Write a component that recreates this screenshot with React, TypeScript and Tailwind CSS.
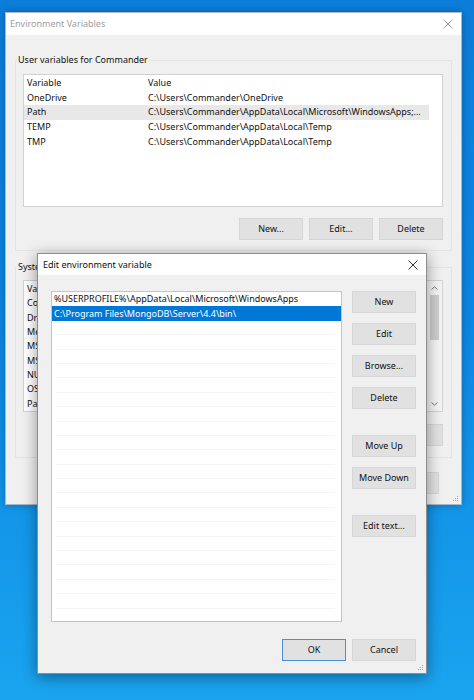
import React from "react";

function CloseX({ color }: { color: string }) {
  return (
    <svg width="10" height="10" viewBox="0 0 10 10" className="shrink-0">
      <path d="M0.5 0.5L9.5 9.5M9.5 0.5L0.5 9.5" stroke={color} strokeWidth="1" fill="none" />
    </svg>
  );
}

function Btn({ children, focused = false }: { children: React.ReactNode; focused?: boolean }) {
  return (
    <div
      className={
        focused
          ? "flex h-[22px] w-[64px] shrink-0 items-center justify-center border border-[#4a90d4] bg-[#e1e1e1] text-[#111]"
          : "flex h-[22px] w-[64px] shrink-0 items-center justify-center border border-[#d6d6d6] bg-[#e1e1e1] text-[#111]"
      }
    >
      {children}
    </div>
  );
}

function Grip() {
  return (
    <svg width="7" height="7" viewBox="0 0 7 7" fill="#a6a6a6">
      <rect x="5" y="1" width="1" height="1" />
      <rect x="5" y="3" width="1" height="1" />
      <rect x="3" y="3" width="1" height="1" />
      <rect x="5" y="5" width="1" height="1" />
      <rect x="3" y="5" width="1" height="1" />
      <rect x="1" y="5" width="1" height="1" />
    </svg>
  );
}

function Chevron({ up }: { up: boolean }) {
  return (
    <svg width="7" height="4" viewBox="0 0 7 4">
      <path d={up ? "M0.5 3.5L3.5 0.8L6.5 3.5" : "M0.5 0.5L3.5 3.2L6.5 0.5"} stroke="#7a7a7a" strokeWidth="1" fill="none" />
    </svg>
  );
}

const userRows: [string, string][] = [
  ["OneDrive", "C:\\Users\\Commander\\OneDrive"],
  ["Path", "C:\\Users\\Commander\\AppData\\Local\\Microsoft\\WindowsApps;..."],
  ["TEMP", "C:\\Users\\Commander\\AppData\\Local\\Temp"],
  ["TMP", "C:\\Users\\Commander\\AppData\\Local\\Temp"],
];

const sysRows = ["ComSpec", "DriverData", "MemoryPath", "MSMPI_BIN", "MSMPI_INC", "NUMBER_OF_PROCESSORS", "OS", "Path"];

export default function App() {
  const emptyRows = Array.from({ length: 21 }, (_, i) => i);
  return (
    <div className="relative h-[700px] w-[474px] overflow-hidden bg-[linear-gradient(180deg,#0c7dd8_0%,#0b86e2_45%,#1aa4ef_100%)] font-['Noto_Sans','Open_Sans',sans-serif] text-[9px] leading-[12px] text-[#111]">
      {/* Outer window: Environment Variables */}
      <div className="absolute left-[5px] top-[12px] flex h-[493px] w-[457px] flex-col border border-[#a9b7c6] bg-[#f0f0f0] shadow-[0_0_8px_rgba(0,0,0,0.25)]">
        <div className="flex h-[22px] shrink-0 items-center justify-between bg-white pl-[4px] pr-[8px] text-[#9d9d9d]">
          <span>Environment Variables</span>
          <CloseX color="#a0a0a0" />
        </div>
        <div className="flex flex-col px-[9px]">
          {/* user group */}
          <div className="mt-[25px] flex flex-col border border-[#e4e4e4] pb-[10px] pl-[7px] pr-[8px]">
            <div className="-ml-[6px] -mt-[7px] h-[12px] w-fit bg-[#f0f0f0] px-[1px]">User variables for Commander</div>
            <div className="mt-[8px] flex h-[133px] flex-col border border-[#d2d2d2] bg-white pt-[1px]">
              <div className="flex h-[14.6px] w-[405px] items-center">
                <span className="w-[124px] pl-[3px]">Variable</span>
                <span>Value</span>
              </div>
              {userRows.map(([k, v]) => (
                <div
                  key={k}
                  className={
                    k === "Path"
                      ? "flex h-[14.6px] w-[405px] items-center bg-[#e8e8e8]"
                      : "flex h-[14.6px] w-[405px] items-center"
                  }
                >
                  <span className="w-[124px] shrink-0 pl-[3px]">{k}</span>
                  <span className="whitespace-nowrap">{v}</span>
                </div>
              ))}
            </div>
            <div className="mt-[11px] flex justify-end gap-[6px]">
              <Btn>New...</Btn>
              <Btn>Edit...</Btn>
              <Btn>Delete</Btn>
            </div>
          </div>

          {/* system group */}
          <div className="mt-[16px] flex flex-col border border-[#e4e4e4] pb-[11px] pl-[7px] pr-[8px]">
            <div className="-ml-[6px] -mt-[7px] h-[12px] w-fit bg-[#f0f0f0] px-[1px]">System variables</div>
            <div className="mt-[7px] flex h-[132px] border border-[#d2d2d2] bg-white">
              <div className="flex flex-1 flex-col overflow-hidden pt-[1px]">
                <div className="flex h-[14.6px] items-center">
                  <span className="w-[124px] pl-[3px]">Variable</span>
                  <span>Value</span>
                </div>
                {sysRows.map((k, i) => (
                  <div key={i} className="flex h-[14.6px] items-center">
                    <span className="w-[124px] shrink-0 pl-[3px]">{k}</span>
                  </div>
                ))}
              </div>
              <div className="flex w-[15px] flex-col bg-[#f4f4f4]">
                <div className="flex h-[14px] items-center justify-center">
                  <Chevron up />
                </div>
                <div className="mx-[3px] h-[45px] bg-[#cdcdcd]" />
                <div className="flex-1" />
                <div className="flex h-[14px] items-center justify-center">
                  <Chevron up={false} />
                </div>
              </div>
            </div>
            <div className="mt-[12px] flex justify-end gap-[6px]">
              <Btn>New...</Btn>
              <Btn>Edit...</Btn>
              <Btn>Delete</Btn>
            </div>
          </div>

          <div className="mt-[14px] flex justify-end gap-[6px] pr-[13px]">
            <Btn>OK</Btn>
            <Btn>Cancel</Btn>
          </div>
        </div>
        <div className="absolute bottom-[2px] right-[2px]">
          <Grip />
        </div>
      </div>

      {/* Inner dialog: Edit environment variable */}
      <div className="absolute left-[37px] top-[253px] flex h-[421px] w-[390px] flex-col border border-[#8e8e8e] bg-[#f0f0f0] shadow-[0_3px_14px_rgba(0,0,0,0.4)]">
        <div className="flex h-[21px] shrink-0 items-center justify-between bg-white pl-[5px] pr-[8px] text-[#111]">
          <span>Edit environment variable</span>
          <CloseX color="#333" />
        </div>
        <div className="flex flex-col pl-[13px] pr-[10px] pt-[16px]">
          <div className="flex">
            <div className="flex h-[331px] w-[291px] shrink-0 flex-col overflow-hidden border border-[#c4c4c4] bg-white">
              <div className="flex h-[14.4px] shrink-0 items-center whitespace-nowrap pl-[2px]">
                %USERPROFILE%\AppData\Local\Microsoft\WindowsApps
              </div>
              <div className="flex h-[14.4px] shrink-0 items-center whitespace-nowrap bg-[#0078d7] pl-[2px] text-white">
                C:\Program Files\MongoDB\Server\4.4\bin\
              </div>
              {emptyRows.map((i) => (
                <div key={i} className="h-[14.4px] shrink-0 pl-[4px] pr-[6px]">
                  <div className="h-full border-b border-[#f5f5f5]" />
                </div>
              ))}
            </div>
            <div className="ml-[10px] flex flex-col">
              <Btn>New</Btn>
              <div className="mt-[10px]">
                <Btn>Edit</Btn>
              </div>
              <div className="mt-[10px]">
                <Btn>Browse...</Btn>
              </div>
              <div className="mt-[10px]">
                <Btn>Delete</Btn>
              </div>
              <div className="mt-[26px]">
                <Btn>Move Up</Btn>
              </div>
              <div className="mt-[10px]">
                <Btn>Move Down</Btn>
              </div>
              <div className="mt-[26px]">
                <Btn>Edit text...</Btn>
              </div>
            </div>
          </div>
          <div className="mt-[17px] flex justify-end gap-[6px]">
            <Btn focused>OK</Btn>
            <Btn>Cancel</Btn>
          </div>
        </div>
        <div className="absolute bottom-[2px] right-[2px]">
          <Grip />
        </div>
      </div>
    </div>
  );
}
